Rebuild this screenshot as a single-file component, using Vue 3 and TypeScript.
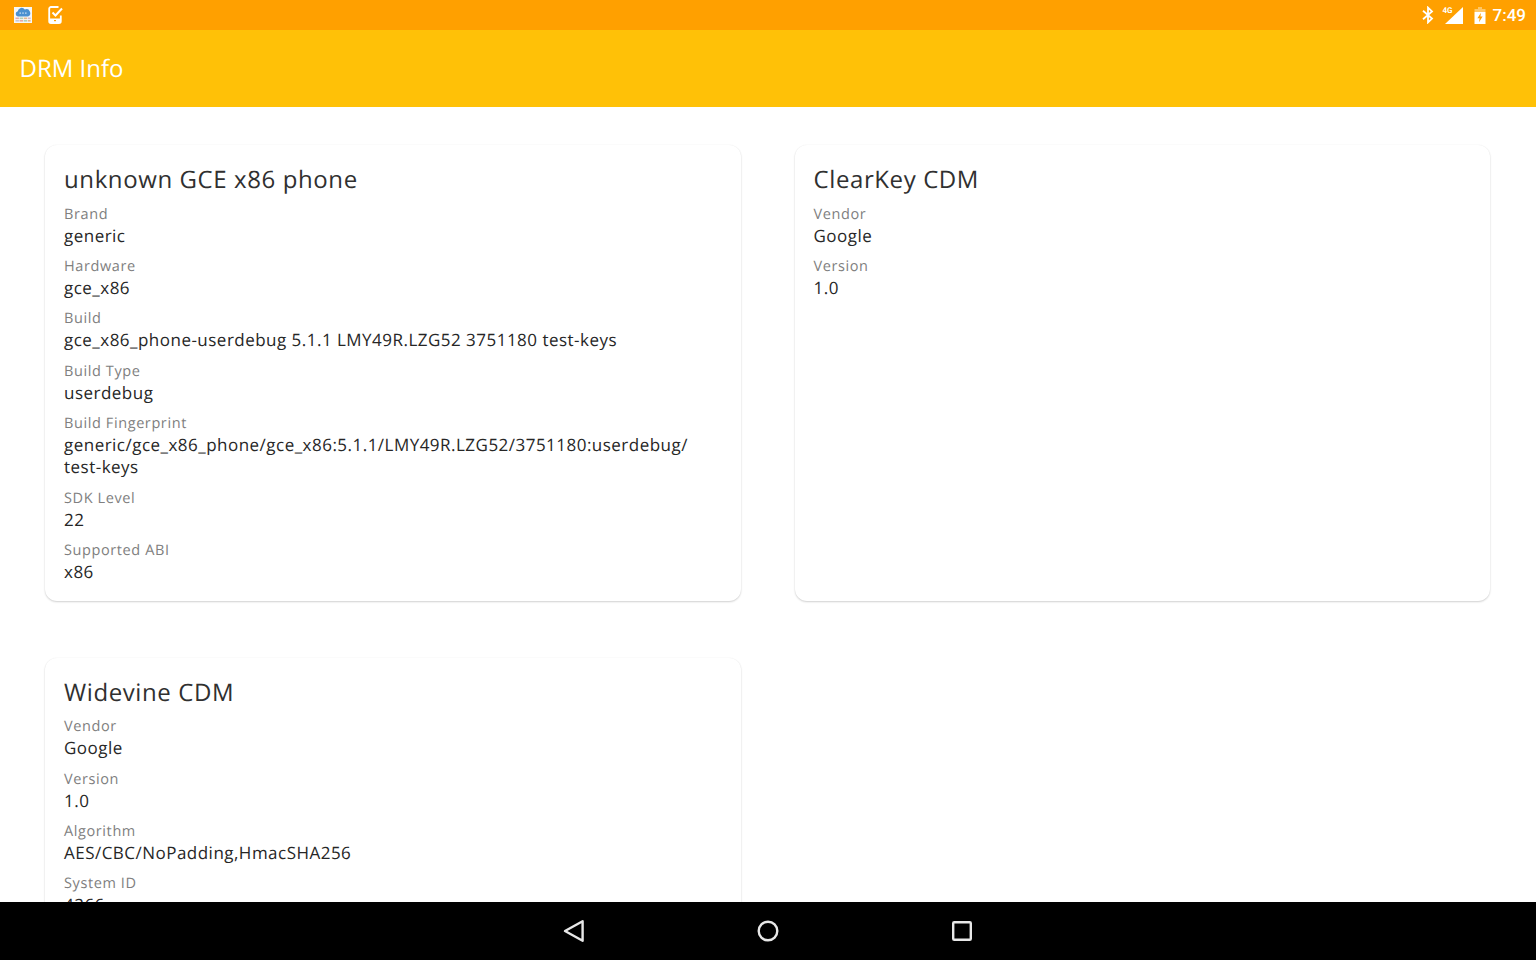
<script setup lang="ts">
interface Field { label: string; value: string }
interface Card { title: string; fields: Field[] }

const cards: Card[] = [
  {
    title: 'unknown GCE x86 phone',
    fields: [
      { label: 'Brand', value: 'generic' },
      { label: 'Hardware', value: 'gce_x86' },
      { label: 'Build', value: 'gce_x86_phone-userdebug 5.1.1 LMY49R.LZG52 3751180 test-keys' },
      { label: 'Build Type', value: 'userdebug' },
      { label: 'Build Fingerprint', value: 'generic/gce_x86_phone/gce_x86:5.1.1/LMY49R.LZG52/3751180:userdebug/\ntest-keys' },
      { label: 'SDK Level', value: '22' },
      { label: 'Supported ABI', value: 'x86' },
    ],
  },
  {
    title: 'ClearKey CDM',
    fields: [
      { label: 'Vendor', value: 'Google' },
      { label: 'Version', value: '1.0' },
    ],
  },
  {
    title: 'Widevine CDM',
    fields: [
      { label: 'Vendor', value: 'Google' },
      { label: 'Version', value: '1.0' },
      { label: 'Algorithm', value: 'AES/CBC/NoPadding,HmacSHA256' },
      { label: 'System ID', value: '4266' },
      { label: 'Security Level', value: 'L3' },
    ],
  },
]
</script>

<template>
  <div class="screen">
    <header class="status">
      <div class="status-left">
        <svg class="notif" width="20" height="18" viewBox="0 0 20 18">
          <rect x="1" y="1" width="18" height="16" fill="#f6f6f6" />
          <path d="M5 10.5a2.7 2.7 0 0 1-.2-5.3A3.8 3.8 0 0 1 11.8 3.6 3 3 0 0 1 15 10.5Z" fill="#4a90d0" />
          <rect x="6.5" y="6.5" width="1.4" height="1.2" fill="#dcebf7" />
          <rect x="9.3" y="6.5" width="1.4" height="1.2" fill="#dcebf7" />
          <rect x="12.1" y="6.5" width="1.4" height="1.2" fill="#dcebf7" />
          <rect x="2.5" y="11.5" width="3.4" height="1.6" fill="#e6a9a9" />
          <rect x="6.6" y="11.5" width="3.4" height="1.6" fill="#afd0b8" />
          <rect x="10.7" y="11.5" width="3.4" height="1.6" fill="#e6b78a" />
          <rect x="14.8" y="11.5" width="2.8" height="1.6" fill="#d4b8c6" />
          <rect x="2.5" y="14" width="3.4" height="1.6" fill="#c6c8d6" />
          <rect x="6.6" y="14" width="3.4" height="1.6" fill="#e6a9a9" />
          <rect x="10.7" y="14" width="3.4" height="1.6" fill="#afd0b8" />
          <rect x="14.8" y="14" width="2.8" height="1.6" fill="#e6b78a" />
        </svg>
        <svg class="notif" width="16" height="18" viewBox="0 0 16 18">
          <path d="M10.5 1H3a1.8 1.8 0 0 0-1.8 1.8v12.4A1.8 1.8 0 0 0 3 17h8a1.8 1.8 0 0 0 1.8-1.8V9.5" fill="none" stroke="#fff" stroke-width="1.8" />
          <rect x="1.5" y="12.5" width="11" height="4" fill="#fff" />
          <path d="M4.5 6.5l3 3 6.5-7" fill="none" stroke="#fff" stroke-width="2" />
          <rect x="6" y="14" width="2" height="1.2" fill="#ffa000" />
        </svg>
      </div>
      <div class="status-right">
        <svg width="12" height="18" viewBox="0 0 12 18">
          <path d="M1 4.8 10 12.6 6 16.4V1.6L10 5.4 1 13.2" fill="none" stroke="#fff" stroke-width="1.8" />
        </svg>
        <div class="signal">
          <span class="net">4G</span>
          <svg width="19" height="17" viewBox="0 0 19 17"><path d="M19 0v17H1Z" fill="#fff" /></svg>
        </div>
        <svg class="battery" width="12" height="17" viewBox="0 0 12 17">
          <path d="M4 0h4v2H4z" fill="#ffc766" />
          <path d="M0.5 2h11v3h-11z" fill="#ffc766" />
          <path fill-rule="evenodd" d="M0.5 5h11v12h-11ZM7 5.8 3.4 11.2H5.6L5 15.2 8.6 9.6H6.4Z" fill="#fff" />
        </svg>
        <span class="time">7:49</span>
      </div>
    </header>
    <div class="toolbar">DRM Info</div>
    <main class="content">
      <section v-for="card in cards" :key="card.title" class="card">
        <h2 class="title">{{ card.title }}</h2>
        <div v-for="field in card.fields" :key="field.label" class="field">
          <div class="label">{{ field.label }}</div>
          <div class="value">{{ field.value }}</div>
        </div>
      </section>
    </main>
    <nav class="navbar">
      <svg width="24" height="26" viewBox="0 0 24 26">
        <path d="M20.6 3.2V22.8L3 13Z" fill="none" stroke="#e8e8e8" stroke-width="2.4" stroke-linejoin="round" />
      </svg>
      <svg width="24" height="24" viewBox="0 0 24 24">
        <circle cx="12" cy="12" r="9.3" fill="none" stroke="#e8e8e8" stroke-width="2.4" />
      </svg>
      <svg width="24" height="24" viewBox="0 0 24 24">
        <rect x="3.2" y="3.2" width="17.6" height="17.6" rx="1" fill="none" stroke="#e8e8e8" stroke-width="2.4" />
      </svg>
    </nav>
  </div>
</template>

<style scoped>
.screen {
  width: 1536px;
  height: 960px;
  display: flex;
  flex-direction: column;
  overflow: hidden;
  background: #fff;
  font-family: "Open Sans", "Noto Sans", sans-serif;
  text-rendering: geometricPrecision;
}
.status {
  height: 30px;
  flex: none;
  background: #ffa000;
  display: flex;
  align-items: center;
  justify-content: space-between;
  padding: 0 10px 0 13px;
}
.status-left {
  display: flex;
  align-items: center;
  gap: 15px;
}
.status-right {
  display: flex;
  align-items: center;
  color: #fff;
  gap: 9px;
}
.signal {
  position: relative;
  display: flex;
  margin-left: 1px;
}
.battery {
  margin-left: 2px;
  margin-right: -2px;
}
.net {
  position: absolute;
  left: -1px;
  top: -1px;
  font-size: 8px;
  font-weight: 700;
  line-height: 10px;
  font-family: "Roboto", sans-serif;
}
.time {
  font-family: "Roboto", sans-serif;
  font-size: 17px;
  font-weight: 500;
  line-height: 20px;
  padding-top: 2px;
}
.toolbar {
  height: 77px;
  flex: none;
  box-sizing: border-box;
  background: #ffc107;
  color: #fff;
  font-size: 24px;
  line-height: 77px;
  padding-left: 19.5px;
}
.content {
  flex: 1;
  min-height: 0;
  overflow: hidden;
  display: grid;
  grid-template-columns: 695.5px 695.5px;
  grid-auto-rows: 456px;
  column-gap: 54px;
  row-gap: 56.7px;
  padding: 38px 45px 0;
  align-content: start;
}
.card {
  box-sizing: border-box;
  border-radius: 12px;
  background: #fff;
  padding: 15px 19px;
  box-shadow: 0 1px 2px rgba(0, 0, 0, 0.18), 0 0 1.5px rgba(0, 0, 0, 0.05);
}
.title {
  margin: 0 0 3.7px;
  font-size: 24px;
  letter-spacing: 0.6px;
  line-height: 40px;
  font-weight: 400;
  color: #303030;
}
.field {
  margin-bottom: 8.9px;
}
.label {
  font-size: 14.5px;
  line-height: 21px;
  letter-spacing: 0.6px;
  color: #808080;
}
.value {
  font-size: 17px;
  letter-spacing: 0.48px;
  line-height: 22.4px;
  color: #262626;
  white-space: pre-line;
}
.navbar {
  height: 58px;
  flex: none;
  background: #000;
  display: flex;
  align-items: center;
  justify-content: center;
  gap: 170px;
}
</style>
